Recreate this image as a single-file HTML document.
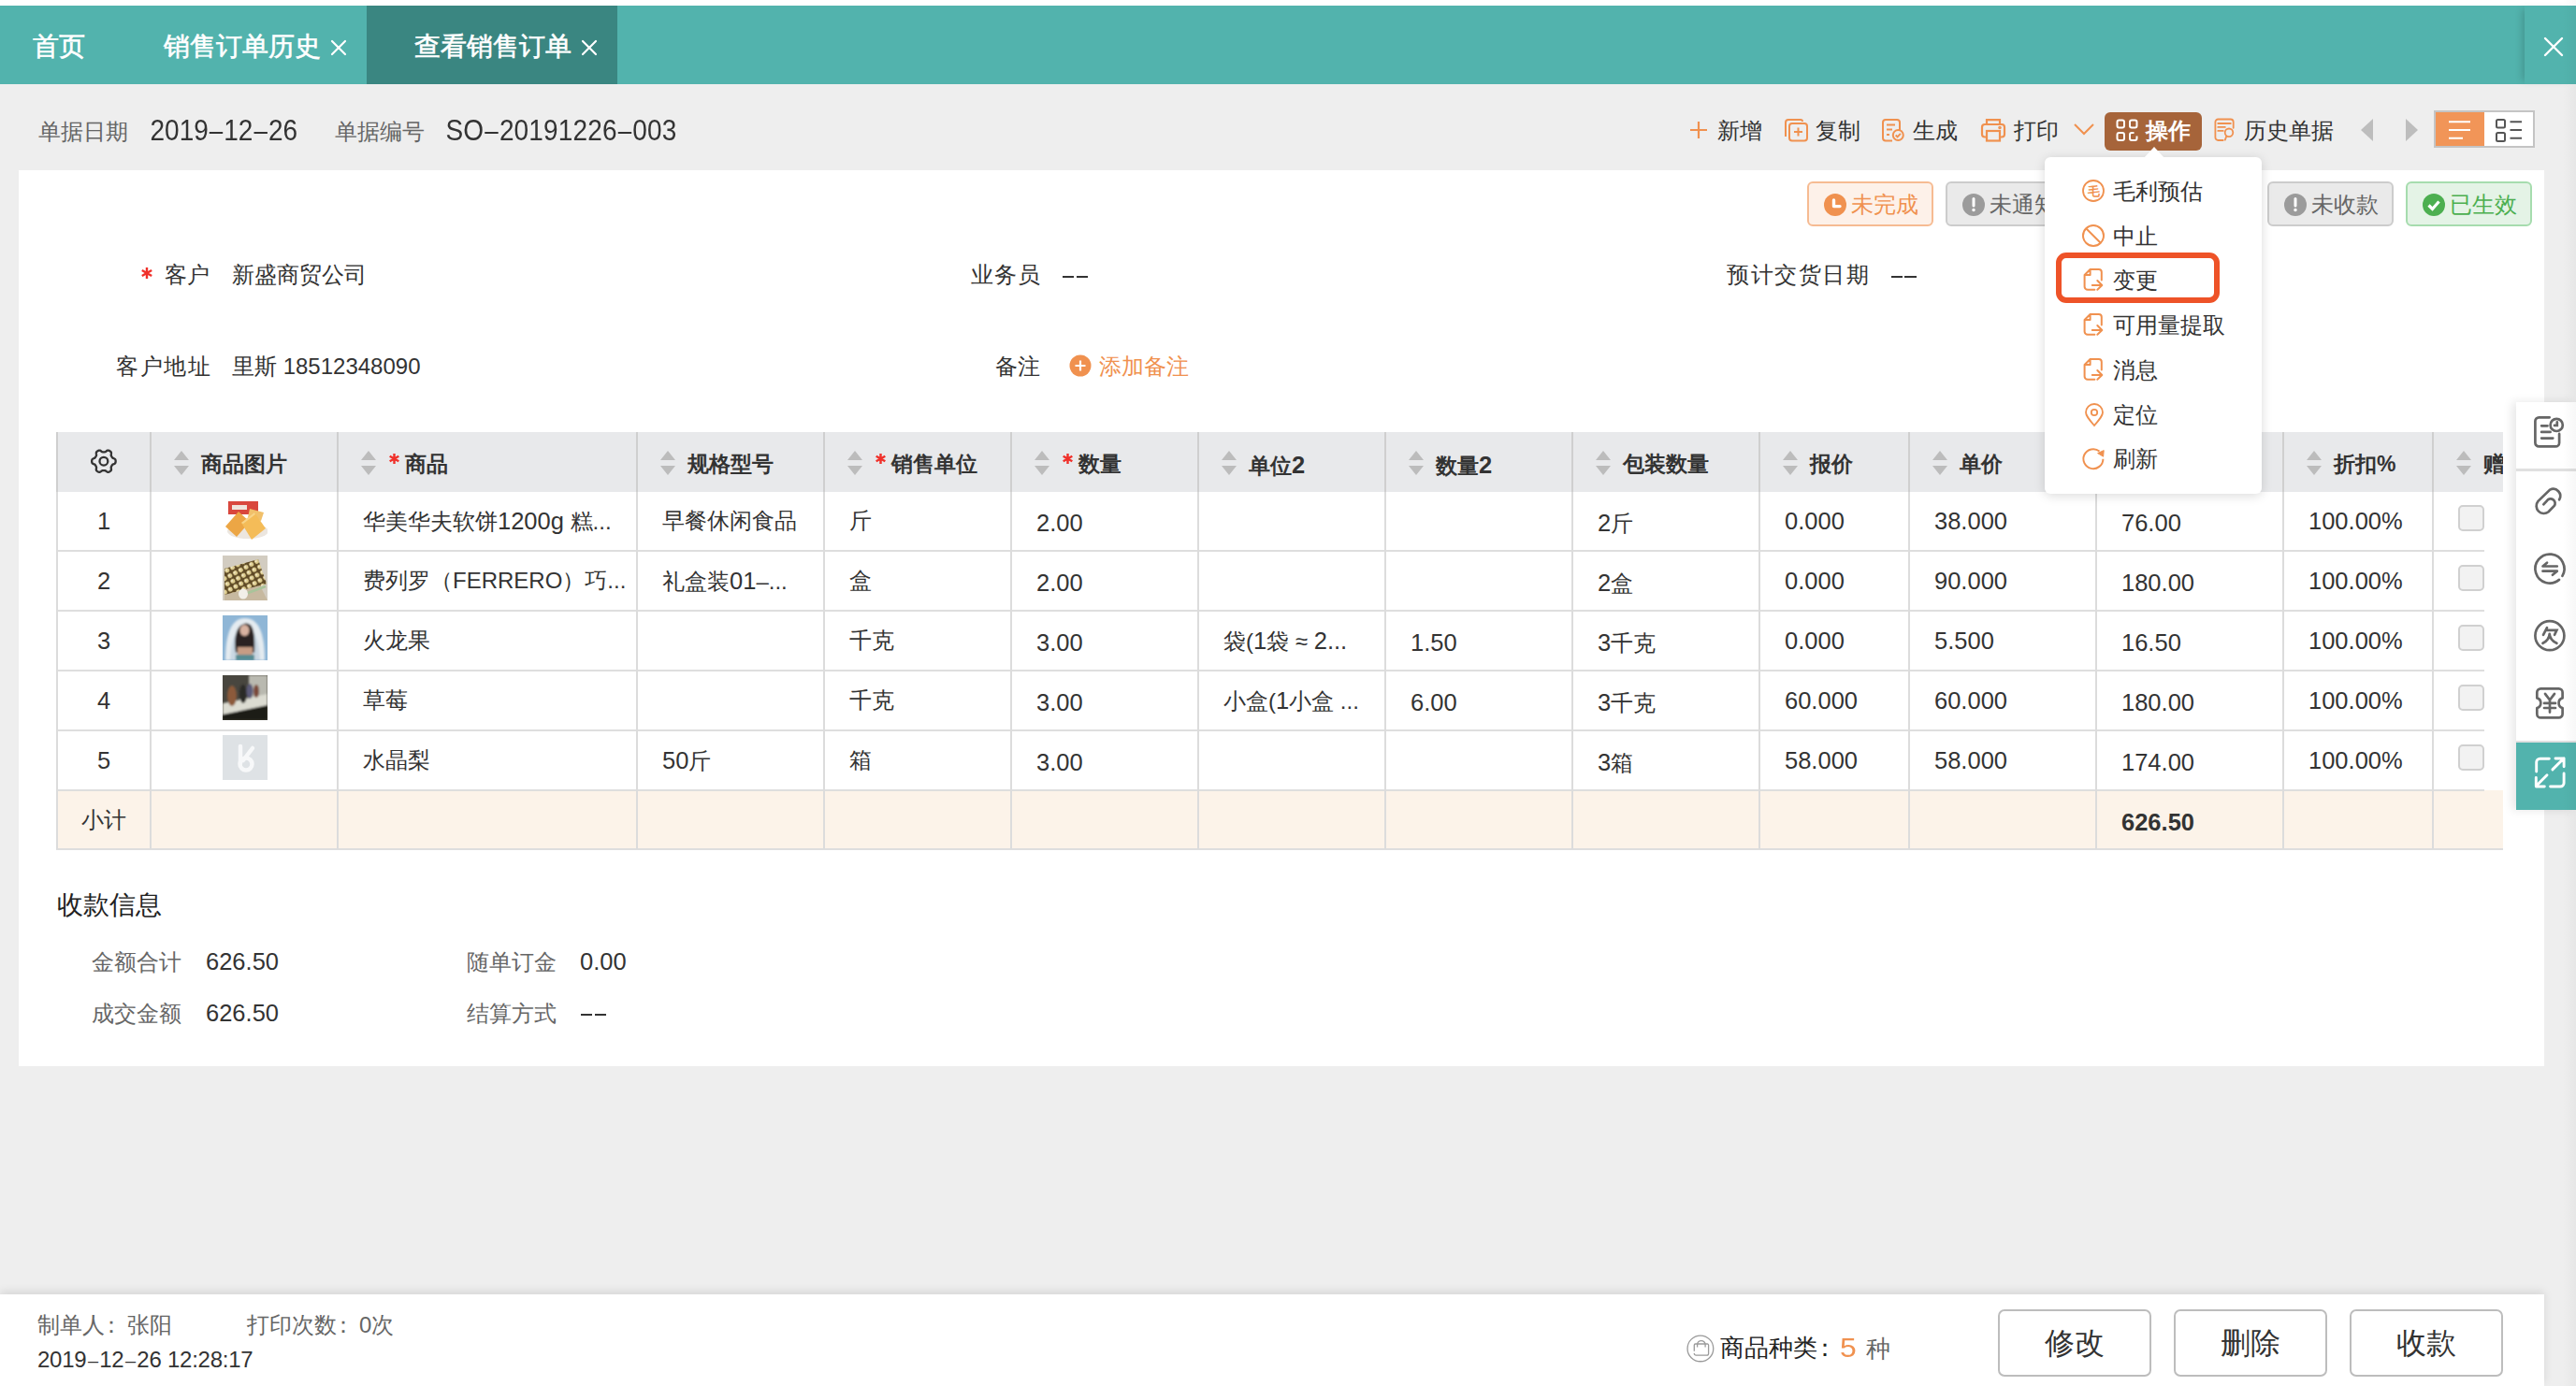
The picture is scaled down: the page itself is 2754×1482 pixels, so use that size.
<!DOCTYPE html>
<html><head><meta charset="utf-8">
<style>
*{box-sizing:border-box;margin:0;padding:0}
html,body{width:2754px;height:1482px;overflow:hidden}
body{position:relative;background:#eeeeee;font-family:"Liberation Sans",sans-serif;color:#333;}
.a{position:absolute;white-space:nowrap;line-height:1}
svg.a{overflow:visible}
#topstrip{left:0;top:0;width:2754px;height:6px;background:#fff}
#tabbar{left:0;top:6px;width:2754px;height:84px;background:#52b3ad}
#acttab{left:392px;top:6px;width:268px;height:84px;background:#3a8681}
.tab{color:#fff;font-size:28px;top:36px;-webkit-text-stroke:0.6px #fff}
#closebar{left:2699px;top:6px;width:55px;height:84px;background:#52b3ad;box-shadow:-6px 0 8px -4px rgba(0,0,0,.18)}
.lbl{color:#666;font-size:24px}
.val{color:#333;font-size:24px}
.tb{color:#333;font-size:24px;top:128px}
#card{left:20px;top:182px;width:2700px;height:958px;background:#fff}
#footer{left:0;top:1384px;width:2720px;height:98px;background:#fff;box-shadow:0 -3px 9px rgba(0,0,0,.10)}
.badge{top:194px;height:48px;width:135px;border:2px solid #ccc;border-radius:6px;background:#eaeaea}
.fl{color:#333;font-size:24px}
.hl{height:2px;background:#dedede}
.vl{width:2px;background:#dcdcdc}
.hd{font-size:23px;font-weight:bold;color:#333}
.td{font-size:24px;color:#333}
.cb{width:28px;height:28px;border:2px solid #d0d0d0;border-radius:5px;background:#f2f2f2}
.img1{background:radial-gradient(ellipse at 55% 60%,#f6b54a 0,#eea83a 40%,#f3ddc0 62%,#fff 70%)}
.img2{background:linear-gradient(160deg,#cfc4ae,#8e7443 40%,#b89c5c 60%,#d9d0c0)}
.img3{background:radial-gradient(ellipse at 50% 45%,#3a3030 0,#4a3a34 25%,#e0e6ea 45%,#8fb3d0 80%)}
.img4{background:linear-gradient(170deg,#2b2b26 0,#6d5a48 35%,#9a8f87 55%,#e8e8e2 70%,#2a2a24 100%)}
.img5{background:#dde1e4}
.btn{top:1400px;width:164px;height:72px;border:2px solid #bdbdbd;border-radius:7px;font-size:32px;color:#333;text-align:center;line-height:68px}
.dd{left:2259px;font-size:23.5px;color:#333;margin-top:2px}
.dsh{width:27px;height:2px;background:linear-gradient(90deg,#333 0,#333 12px,transparent 12px,transparent 14.5px,#333 14.5px)}
.num{font-size:25.5px}
</style></head><body>
<div class="a" id="topstrip"></div>
<div class="a" id="tabbar"></div>
<div class="a" id="acttab"></div>
<div class="a tab" style="left:35px">首页</div>
<div class="a tab" style="left:175px">销售订单历史</div>
<div class="a tab" style="left:443px">查看销售订单</div>
<svg class="a" style="left:353px;top:42px" width="18" height="18" viewBox="0 0 18 18"><path d="M2 2L16 16M16 2L2 16" stroke="#fff" stroke-width="2.2" stroke-linecap="round"/></svg>
<svg class="a" style="left:621px;top:42px" width="18" height="18" viewBox="0 0 18 18"><path d="M2 2L16 16M16 2L2 16" stroke="#fff" stroke-width="2.2" stroke-linecap="round"/></svg>
<div class="a" id="closebar"></div>
<svg class="a" style="left:2720px;top:40px" width="20" height="20" viewBox="0 0 20 20"><path d="M1 1L19 19M19 1L1 19" stroke="#fff" stroke-width="2.4" stroke-linecap="round"/></svg>

<!-- toolbar -->
<div class="a lbl" style="left:41px;top:129px">单据日期</div>
<div class="a val" style="left:160.5px;top:125px;font-size:28px;color:#333;transform:scaleY(1.1);transform-origin:0 0">2019<span style="display:inline-block;font-size:26px;margin:0 1px">–</span>12<span style="display:inline-block;font-size:26px;margin:0 1px">–</span>26</div>
<div class="a lbl" style="left:358px;top:129px">单据编号</div>
<div class="a val" style="left:476.5px;top:125px;font-size:28px;color:#333;transform:scaleY(1.1);transform-origin:0 0;letter-spacing:0.15px">SO<span style="display:inline-block;font-size:26px;margin:0 1px">–</span>20191226<span style="display:inline-block;font-size:26px;margin:0 1px">–</span>003</div>

<!-- toolbar right -->
<svg class="a" style="left:1806px;top:129px" width="20" height="20" viewBox="0 0 20 20"><path d="M10 1V19M1 10H19" stroke="#f0914f" stroke-width="2.2"/></svg>
<div class="a tb" style="left:1836px">新增</div>
<svg class="a" style="left:1907px;top:126px" width="26" height="26" viewBox="0 0 26 26" fill="none" stroke="#f0914f" stroke-width="2"><path d="M2 20V5a3 3 0 0 1 3-3h13a2 2 0 0 1 2 2"/><rect x="6" y="6" width="19" height="18.5" rx="3"/><path d="M15.5 10.5V19.5M11 15H20"/></svg>
<div class="a tb" style="left:1941px">复制</div>
<svg class="a" style="left:2011px;top:126px" width="26" height="26" viewBox="0 0 26 26" fill="none" stroke="#f0914f" stroke-width="2"><path d="M12 24.5H5a3 3 0 0 1-3-3V5a3 3 0 0 1 3-3h12a3 3 0 0 1 3 3v8"/><path d="M6 7.5H15M6 12.5H12M6 18H9"/><circle cx="18.3" cy="18.5" r="5.5"/><path d="M15.7 18.5L17.6 20.4L20.9 16.9"/></svg>
<div class="a tb" style="left:2045px">生成</div>
<svg class="a" style="left:2117px;top:126px" width="28" height="26" viewBox="0 0 28 26" fill="none" stroke="#f0914f" stroke-width="2.2"><path d="M7 7V2.2H21V7"/><path d="M7 20.5H5a3 3 0 0 1-3-3V10a3 3 0 0 1 3-3h18a3 3 0 0 1 3 3v7.5a3 3 0 0 1-3 3h-2"/><rect x="7" y="14" width="14" height="10.5"/><circle cx="21" cy="10.5" r=".7" fill="#f0914f"/></svg>
<div class="a tb" style="left:2153px">打印</div>
<svg class="a" style="left:2216px;top:131px" width="24" height="14" viewBox="0 0 24 14"><path d="M2 2L12 12L22 2" stroke="#f0914f" stroke-width="2" fill="none"/></svg>
<div class="a" style="left:2250px;top:120px;width:104px;height:41px;background:#a6643a;border-radius:6px"></div>
<svg class="a" style="left:2262px;top:127px" width="24" height="24" viewBox="0 0 24 24" fill="none" stroke="#fff" stroke-width="2"><rect x="1.5" y="1.5" width="7.5" height="8" rx="2"/><rect x="15" y="1.5" width="7.5" height="8" rx="2"/><rect x="1.5" y="15" width="7.5" height="8" rx="2"/><path d="M19.5 15H17a2 2 0 0 0-2 2v4a2 2 0 0 0 2 2h3.5a2 2 0 0 0 2-2v-2.5"/></svg>
<div class="a tb" style="left:2294px;color:#fff;font-weight:bold">操作</div>
<svg class="a" style="left:2367px;top:126px" width="24" height="26" viewBox="0 0 24 26" fill="none" stroke="#f0914f" stroke-width="1.8" stroke-linecap="round"><path d="M9.7 24H4.4a3 3 0 0 1-3-3V4.5a3 3 0 0 1 3-3H17.7a3 3 0 0 1 3 3V10.8"/><path d="M4.3 6H17.8M4.3 9.9H11.8M4.3 13.9H9.7" stroke-width="1.9"/><circle cx="16" cy="15.8" r="4.3"/><path d="M13.3 19.6L11.8 23.6"/></svg>
<div class="a tb" style="left:2399px">历史单据</div>
<svg class="a" style="left:2524px;top:127px" width="14" height="24" viewBox="0 0 14 24"><path d="M13 0V24L0 12Z" fill="#bdbdbd"/></svg>
<svg class="a" style="left:2571px;top:127px" width="14" height="24" viewBox="0 0 14 24"><path d="M1 0V24L14 12Z" fill="#bdbdbd"/></svg>
<div class="a" style="left:2602px;top:118px;width:108px;height:40px;border:2px solid #c4c4c4;background:#fff"></div>
<div class="a" style="left:2604px;top:120px;width:52px;height:36px;background:#f19558"></div>
<svg class="a" style="left:2618px;top:129px" width="24" height="20" viewBox="0 0 24 20" stroke="#fff" stroke-width="2"><path d="M0 1.3H23M0 10H23M0 18.7H15"/></svg>
<svg class="a" style="left:2668px;top:127px" width="29" height="25" viewBox="0 0 29 25" fill="none" stroke="#555" stroke-width="2"><rect x="1" y="1" width="9" height="8.5" rx="1.5"/><rect x="1" y="15" width="9" height="9" rx="1.5"/><path d="M15.5 3.3H28M15.5 12H28M15.5 20.7H28"/></svg>

<div class="a" id="card"></div>

<!-- badges -->
<div class="a badge" style="left:1932px;background:#fdf1e9;border-color:#f6bb92"></div>
<svg class="a" style="left:1950px;top:207px" width="24" height="24" viewBox="0 0 24 24"><circle cx="12" cy="12" r="12" fill="#f0914f"/><path d="M10.5 6.9V13.6H17" stroke="#fff" stroke-width="3.4" stroke-linecap="round" stroke-linejoin="round" fill="none"/></svg>
<div class="a" style="left:1979px;top:207px;font-size:24px;color:#f0914f">未完成</div>
<div class="a badge" style="left:2080px"></div>
<svg class="a" style="left:2098px;top:207px" width="24" height="24" viewBox="0 0 24 24"><circle cx="12" cy="12" r="12" fill="#9b9b9b"/><path d="M12 5.5V13" stroke="#fff" stroke-width="3" stroke-linecap="round"/><circle cx="12" cy="17.5" r="1.7" fill="#fff"/></svg>
<div class="a" style="left:2127px;top:207px;font-size:24px;color:#666">未通知</div>
<div class="a badge" style="left:2276px"></div>
<div class="a badge" style="left:2424px"></div>
<svg class="a" style="left:2442px;top:207px" width="24" height="24" viewBox="0 0 24 24"><circle cx="12" cy="12" r="12" fill="#9b9b9b"/><path d="M12 5.5V13" stroke="#fff" stroke-width="3" stroke-linecap="round"/><circle cx="12" cy="17.5" r="1.7" fill="#fff"/></svg>
<div class="a" style="left:2471px;top:207px;font-size:24px;color:#666">未收款</div>
<div class="a badge" style="left:2572px;background:#e4f3e6;border-color:#a6dcae"></div>
<svg class="a" style="left:2590px;top:207px" width="24" height="24" viewBox="0 0 24 24"><circle cx="12" cy="12" r="12" fill="#4caf50"/><path d="M6.5 12.5L10.5 16.5L17.5 8.5" stroke="#fff" stroke-width="3.2" fill="none"/></svg>
<div class="a" style="left:2619px;top:207px;font-size:24px;color:#4caf50">已生效</div>

<!-- form -->
<svg class="a" style="left:150px;top:285px" width="14" height="14" viewBox="0 0 14 14"><path d="M7 1V13M1.8 4L12.2 10M12.2 4L1.8 10" stroke="#f0302a" stroke-width="2.4"/></svg>
<div class="a fl" style="left:176px;top:282px">客户</div>
<div class="a fl" style="left:248px;top:282px">新盛商贸公司</div>
<div class="a fl" style="left:1038px;top:282px;letter-spacing:1px">业务员</div>
<div class="a dsh" style="left:1136px;top:295px"></div>
<div class="a fl" style="left:1846px;top:282px;letter-spacing:1.5px">预计交货日期</div>
<div class="a dsh" style="left:2022px;top:295px"></div>
<div class="a fl" style="left:124px;top:380px;letter-spacing:1.5px">客户地址</div>
<div class="a fl" style="left:248px;top:380px">里斯 18512348090</div>
<div class="a fl" style="left:1064px;top:380px">备注</div>
<svg class="a" style="left:1143px;top:379px" width="24" height="24" viewBox="0 0 24 24"><circle cx="12" cy="12" r="11.5" fill="#f0914f"/><path d="M12 6.5V17.5M6.5 12H17.5" stroke="#fff" stroke-width="2.2"/></svg>
<div class="a fl" style="left:1175px;top:380px;color:#f0914f">添加备注</div>

<div class="a" style="left:0;top:0;width:2676px;height:1000px;overflow:hidden">
<!-- table -->
<div class="a" style="left:60px;top:462px;width:2616px;height:64px;background:#e8e9eb"></div>
<div class="a" style="left:60px;top:845px;width:2616px;height:63px;background:#fcf3e9"></div>
<div class="a hl" style="left:60px;top:588px;width:2596px"></div>
<div class="a hl" style="left:60px;top:652px;width:2596px"></div>
<div class="a hl" style="left:60px;top:716px;width:2596px"></div>
<div class="a hl" style="left:60px;top:780px;width:2596px"></div>
<div class="a hl" style="left:60px;top:844px;width:2596px"></div>
<div class="a hl" style="left:60px;top:907px;width:2616px"></div>
<div class="a vl" style="left:60px;top:462px;height:446px"></div>
<div class="a vl" style="left:60px;top:462px;height:64px;background:#cfcfcf"></div>
<div class="a vl" style="left:160px;top:462px;height:446px"></div>
<div class="a vl" style="left:160px;top:462px;height:64px;background:#cfcfcf"></div>
<div class="a vl" style="left:360px;top:462px;height:446px"></div>
<div class="a vl" style="left:360px;top:462px;height:64px;background:#cfcfcf"></div>
<div class="a vl" style="left:680px;top:462px;height:446px"></div>
<div class="a vl" style="left:680px;top:462px;height:64px;background:#cfcfcf"></div>
<div class="a vl" style="left:880px;top:462px;height:446px"></div>
<div class="a vl" style="left:880px;top:462px;height:64px;background:#cfcfcf"></div>
<div class="a vl" style="left:1080px;top:462px;height:446px"></div>
<div class="a vl" style="left:1080px;top:462px;height:64px;background:#cfcfcf"></div>
<div class="a vl" style="left:1280px;top:462px;height:446px"></div>
<div class="a vl" style="left:1280px;top:462px;height:64px;background:#cfcfcf"></div>
<div class="a vl" style="left:1480px;top:462px;height:446px"></div>
<div class="a vl" style="left:1480px;top:462px;height:64px;background:#cfcfcf"></div>
<div class="a vl" style="left:1680px;top:462px;height:446px"></div>
<div class="a vl" style="left:1680px;top:462px;height:64px;background:#cfcfcf"></div>
<div class="a vl" style="left:1880px;top:462px;height:446px"></div>
<div class="a vl" style="left:1880px;top:462px;height:64px;background:#cfcfcf"></div>
<div class="a vl" style="left:2040px;top:462px;height:446px"></div>
<div class="a vl" style="left:2040px;top:462px;height:64px;background:#cfcfcf"></div>
<div class="a vl" style="left:2240px;top:462px;height:446px"></div>
<div class="a vl" style="left:2240px;top:462px;height:64px;background:#cfcfcf"></div>
<div class="a vl" style="left:2440px;top:462px;height:446px"></div>
<div class="a vl" style="left:2440px;top:462px;height:64px;background:#cfcfcf"></div>
<div class="a vl" style="left:2600px;top:462px;height:446px"></div>
<div class="a vl" style="left:2600px;top:462px;height:64px;background:#cfcfcf"></div>
<svg class="a" style="left:96px;top:479px" width="30" height="30" viewBox="0 0 30 30" fill="none" stroke="#333" stroke-width="2.3"><path d="M27.65 14.20 L27.62 14.87 L27.50 15.52 L27.25 16.16 L26.71 16.71 L25.81 17.12 L24.91 17.45 L24.33 17.82 L23.97 18.24 L23.69 18.68 L23.43 19.12 L23.17 19.57 L22.93 20.03 L22.75 20.55 L22.72 21.24 L22.89 22.19 L22.98 23.17 L22.77 23.92 L22.35 24.45 L21.84 24.88 L21.28 25.24 L20.68 25.55 L20.05 25.78 L19.38 25.87 L18.63 25.68 L17.82 25.11 L17.09 24.50 L16.48 24.17 L15.94 24.07 L15.42 24.05 L14.90 24.05 L14.38 24.05 L13.86 24.07 L13.32 24.17 L12.71 24.50 L11.98 25.11 L11.17 25.68 L10.42 25.87 L9.75 25.78 L9.12 25.55 L8.53 25.24 L7.96 24.88 L7.45 24.45 L7.03 23.92 L6.82 23.17 L6.91 22.19 L7.08 21.24 L7.05 20.55 L6.87 20.03 L6.63 19.57 L6.37 19.12 L6.11 18.68 L5.83 18.24 L5.47 17.82 L4.89 17.45 L3.99 17.12 L3.09 16.71 L2.55 16.16 L2.30 15.52 L2.18 14.87 L2.15 14.20 L2.18 13.53 L2.30 12.88 L2.55 12.24 L3.09 11.69 L3.99 11.28 L4.89 10.95 L5.47 10.58 L5.83 10.16 L6.11 9.72 L6.37 9.28 L6.63 8.83 L6.87 8.37 L7.05 7.85 L7.08 7.16 L6.91 6.21 L6.82 5.23 L7.03 4.48 L7.45 3.95 L7.96 3.52 L8.52 3.16 L9.12 2.85 L9.75 2.62 L10.42 2.53 L11.17 2.72 L11.98 3.29 L12.71 3.90 L13.32 4.23 L13.86 4.33 L14.38 4.35 L14.90 4.35 L15.42 4.35 L15.94 4.33 L16.48 4.23 L17.09 3.90 L17.82 3.29 L18.63 2.72 L19.38 2.53 L20.05 2.62 L20.68 2.85 L21.28 3.16 L21.84 3.52 L22.35 3.95 L22.77 4.48 L22.98 5.23 L22.89 6.21 L22.72 7.16 L22.75 7.85 L22.93 8.37 L23.17 8.83 L23.43 9.28 L23.69 9.72 L23.97 10.16 L24.33 10.58 L24.91 10.95 L25.81 11.28 L26.71 11.69 L27.25 12.24 L27.50 12.88 L27.62 13.53Z" stroke-linejoin="round"/><circle cx="14.9" cy="14.2" r="4.4"/></svg>
<svg class="a" style="left:186px;top:482px" width="16" height="26" viewBox="0 0 16 26"><path d="M8 0L16 10H0Z M0 16H16L8 26Z" fill="#bcbcbc"/></svg>
<div class="a hd" style="left:215px;top:485px">商品图片</div>
<svg class="a" style="left:386px;top:482px" width="16" height="26" viewBox="0 0 16 26"><path d="M8 0L16 10H0Z M0 16H16L8 26Z" fill="#bcbcbc"/></svg>
<svg class="a" style="left:415px;top:484px" width="13" height="13" viewBox="0 0 14 14"><path d="M7 1V13M1.8 4L12.2 10M12.2 4L1.8 10" stroke="#f0302a" stroke-width="2.6"/></svg>
<div class="a hd" style="left:433px;top:485px">商品</div>
<svg class="a" style="left:706px;top:482px" width="16" height="26" viewBox="0 0 16 26"><path d="M8 0L16 10H0Z M0 16H16L8 26Z" fill="#bcbcbc"/></svg>
<div class="a hd" style="left:735px;top:485px">规格型号</div>
<svg class="a" style="left:906px;top:482px" width="16" height="26" viewBox="0 0 16 26"><path d="M8 0L16 10H0Z M0 16H16L8 26Z" fill="#bcbcbc"/></svg>
<svg class="a" style="left:935px;top:484px" width="13" height="13" viewBox="0 0 14 14"><path d="M7 1V13M1.8 4L12.2 10M12.2 4L1.8 10" stroke="#f0302a" stroke-width="2.6"/></svg>
<div class="a hd" style="left:953px;top:485px">销售单位</div>
<svg class="a" style="left:1106px;top:482px" width="16" height="26" viewBox="0 0 16 26"><path d="M8 0L16 10H0Z M0 16H16L8 26Z" fill="#bcbcbc"/></svg>
<svg class="a" style="left:1135px;top:484px" width="13" height="13" viewBox="0 0 14 14"><path d="M7 1V13M1.8 4L12.2 10M12.2 4L1.8 10" stroke="#f0302a" stroke-width="2.6"/></svg>
<div class="a hd" style="left:1153px;top:485px">数量</div>
<svg class="a" style="left:1306px;top:482px" width="16" height="26" viewBox="0 0 16 26"><path d="M8 0L16 10H0Z M0 16H16L8 26Z" fill="#bcbcbc"/></svg>
<div class="a hd" style="left:1335px;top:485px">单位<span class="num">2</span></div>
<svg class="a" style="left:1506px;top:482px" width="16" height="26" viewBox="0 0 16 26"><path d="M8 0L16 10H0Z M0 16H16L8 26Z" fill="#bcbcbc"/></svg>
<div class="a hd" style="left:1535px;top:485px">数量<span class="num">2</span></div>
<svg class="a" style="left:1706px;top:482px" width="16" height="26" viewBox="0 0 16 26"><path d="M8 0L16 10H0Z M0 16H16L8 26Z" fill="#bcbcbc"/></svg>
<div class="a hd" style="left:1735px;top:485px">包装数量</div>
<svg class="a" style="left:1906px;top:482px" width="16" height="26" viewBox="0 0 16 26"><path d="M8 0L16 10H0Z M0 16H16L8 26Z" fill="#bcbcbc"/></svg>
<div class="a hd" style="left:1935px;top:485px">报价</div>
<svg class="a" style="left:2066px;top:482px" width="16" height="26" viewBox="0 0 16 26"><path d="M8 0L16 10H0Z M0 16H16L8 26Z" fill="#bcbcbc"/></svg>
<div class="a hd" style="left:2095px;top:485px">单价</div>
<svg class="a" style="left:2266px;top:482px" width="16" height="26" viewBox="0 0 16 26"><path d="M8 0L16 10H0Z M0 16H16L8 26Z" fill="#bcbcbc"/></svg>
<div class="a hd" style="left:2295px;top:485px">金额</div>
<svg class="a" style="left:2466px;top:482px" width="16" height="26" viewBox="0 0 16 26"><path d="M8 0L16 10H0Z M0 16H16L8 26Z" fill="#bcbcbc"/></svg>
<div class="a hd" style="left:2495px;top:485px">折扣%</div>
<svg class="a" style="left:2626px;top:482px" width="16" height="26" viewBox="0 0 16 26"><path d="M8 0L16 10H0Z M0 16H16L8 26Z" fill="#bcbcbc"/></svg>
<div class="a hd" style="left:2655px;top:485px">赠品</div>
<div class="a td num" style="left:60px;width:102px;text-align:center;top:545px">1</div>
<svg class="a" style="left:238px;top:531px;overflow:hidden" width="48" height="48" viewBox="0 0 48 48"><defs><filter id="bl1"><feGaussianBlur stdDeviation="0.7"/></filter></defs><g filter="url(#bl1)"><ellipse cx="27" cy="37" rx="22" ry="8" fill="#ece6df"/><rect x="6" y="5" width="32" height="14" fill="#d9473d"/><rect x="10" y="9" width="16" height="5" fill="#efe4dc"/><path d="M29 13L44 17L41 26L27 22Z" fill="#f1c06a"/><path d="M3 32L17 16L29 27L15 43Z" fill="#eca645"/><path d="M20 28L34 17L46 34L31 46Z" fill="#f4bc58"/><path d="M20 28L34 17L35 19L22 29Z" fill="#f8d489"/></g></svg>
<div class="a td" style="left:388px;top:545px">华美华夫软饼<span class="num">1200g</span> 糕...</div>
<div class="a td" style="left:708px;top:545px">早餐休闲食品</div>
<div class="a td" style="left:908px;top:545px">斤</div>
<div class="a td" style="left:1108px;top:547px"><span class="num">2.00</span></div>
<div class="a td" style="left:1708px;top:547px"><span class="num">2</span>斤</div>
<div class="a td" style="left:1908px;top:545px"><span class="num">0.000</span></div>
<div class="a td" style="left:2068px;top:545px"><span class="num">38.000</span></div>
<div class="a td" style="left:2268px;top:547px"><span class="num">76.00</span></div>
<div class="a td" style="left:2468px;top:545px"><span class="num">100.00%</span></div>
<div class="a cb" style="left:2628px;top:540px"></div>
<div class="a td num" style="left:60px;width:102px;text-align:center;top:609px">2</div>
<svg class="a" style="left:238px;top:594px;overflow:hidden" width="48" height="48" viewBox="0 0 48 48"><defs><pattern id="fp" width="6.5" height="6.5" patternUnits="userSpaceOnUse" patternTransform="rotate(-28)"><rect width="6.5" height="6.5" fill="#5e4a26"/><circle cx="3.25" cy="3.25" r="2.5" fill="#dccb8e"/><circle cx="2.6" cy="2.6" r="1" fill="#f4ecd0"/></pattern><filter id="bl2"><feGaussianBlur stdDeviation="0.7"/></filter></defs><rect width="48" height="48" fill="#d2ccc1"/><g filter="url(#bl2)"><path d="M2 14L38 4L47 30L10 47L2 42Z" fill="url(#fp)"/><path d="M2 42L40 32L48 48H2Z" fill="#c7b9a0"/><ellipse cx="22" cy="41" rx="5" ry="5.5" fill="#f2efe8"/><path d="M27 40L46 33" stroke="#a9c49a" stroke-width="2.5"/></g></svg>
<div class="a td" style="left:388px;top:609px">费列罗（FERRERO）巧...</div>
<div class="a td" style="left:708px;top:609px">礼盒装<span class="num">01</span>–...</div>
<div class="a td" style="left:908px;top:609px">盒</div>
<div class="a td" style="left:1108px;top:611px"><span class="num">2.00</span></div>
<div class="a td" style="left:1708px;top:611px"><span class="num">2</span>盒</div>
<div class="a td" style="left:1908px;top:609px"><span class="num">0.000</span></div>
<div class="a td" style="left:2068px;top:609px"><span class="num">90.000</span></div>
<div class="a td" style="left:2268px;top:611px"><span class="num">180.00</span></div>
<div class="a td" style="left:2468px;top:609px"><span class="num">100.00%</span></div>
<div class="a cb" style="left:2628px;top:604px"></div>
<div class="a td num" style="left:60px;width:102px;text-align:center;top:673px">3</div>
<svg class="a" style="left:238px;top:658px;overflow:hidden" width="48" height="48" viewBox="0 0 48 48"><defs><filter id="bl3"><feGaussianBlur stdDeviation="1"/></filter></defs><rect width="48" height="48" fill="#8fb6d6"/><g filter="url(#bl3)"><path d="M3 48C3 18 10 3 24 3S45 18 45 48Z" fill="#e4ebf0"/><path d="M8 48C9 30 12 20 16 18L32 18C36 20 39 30 40 48Z" fill="#c9d7e2"/><path d="M14 40C12 28 13 12 23 9S35 20 34 40Z" fill="#2a2220"/><ellipse cx="23.5" cy="16" rx="5" ry="6" fill="#d8b2a0"/><path d="M16 34H32V44H16Z" fill="#c69c84"/><path d="M14 42H34V48H14Z" fill="#578c92"/></g></svg>
<div class="a td" style="left:388px;top:673px">火龙果</div>
<div class="a td" style="left:908px;top:673px">千克</div>
<div class="a td" style="left:1108px;top:675px"><span class="num">3.00</span></div>
<div class="a td" style="left:1308px;top:673px">袋(<span class="num">1</span>袋 ≈ <span class="num">2...</span></div>
<div class="a td" style="left:1508px;top:675px"><span class="num">1.50</span></div>
<div class="a td" style="left:1708px;top:675px"><span class="num">3</span>千克</div>
<div class="a td" style="left:1908px;top:673px"><span class="num">0.000</span></div>
<div class="a td" style="left:2068px;top:673px"><span class="num">5.500</span></div>
<div class="a td" style="left:2268px;top:675px"><span class="num">16.50</span></div>
<div class="a td" style="left:2468px;top:673px"><span class="num">100.00%</span></div>
<div class="a cb" style="left:2628px;top:668px"></div>
<div class="a td num" style="left:60px;width:102px;text-align:center;top:737px">4</div>
<svg class="a" style="left:238px;top:722px;overflow:hidden" width="48" height="48" viewBox="0 0 48 48"><defs><filter id="bl4"><feGaussianBlur stdDeviation="1"/></filter></defs><rect width="48" height="48" fill="#48463f"/><g filter="url(#bl4)"><rect x="28" y="0" width="20" height="30" fill="#b9b9b0"/><path d="M0 30L48 20V38L0 48Z" fill="#dcdcd2"/><path d="M0 42L48 32V48H0Z" fill="#1c1c18"/><ellipse cx="10" cy="22" rx="5" ry="11" fill="#8c5a3a"/><ellipse cx="22" cy="20" rx="4" ry="10" fill="#2a2a26"/><ellipse cx="29" cy="17" rx="3.5" ry="8" fill="#5c5a78"/><ellipse cx="36" cy="17" rx="3" ry="7" fill="#7a4a3a"/></g></svg>
<div class="a td" style="left:388px;top:737px">草莓</div>
<div class="a td" style="left:908px;top:737px">千克</div>
<div class="a td" style="left:1108px;top:739px"><span class="num">3.00</span></div>
<div class="a td" style="left:1308px;top:737px">小盒(<span class="num">1</span>小盒 ...</div>
<div class="a td" style="left:1508px;top:739px"><span class="num">6.00</span></div>
<div class="a td" style="left:1708px;top:739px"><span class="num">3</span>千克</div>
<div class="a td" style="left:1908px;top:737px"><span class="num">60.000</span></div>
<div class="a td" style="left:2068px;top:737px"><span class="num">60.000</span></div>
<div class="a td" style="left:2268px;top:739px"><span class="num">180.00</span></div>
<div class="a td" style="left:2468px;top:737px"><span class="num">100.00%</span></div>
<div class="a cb" style="left:2628px;top:732px"></div>
<div class="a td num" style="left:60px;width:102px;text-align:center;top:801px">5</div>
<svg class="a" style="left:238px;top:786px;overflow:hidden" width="48" height="48" viewBox="0 0 48 48"><rect width="48" height="48" fill="#dee2e5"/><g fill="none" stroke="#f7f8f9" stroke-width="4.5" stroke-linecap="round"><path d="M19 12V30"/><path d="M32 14L22 27"/><circle cx="25" cy="31" r="6.5"/></g></svg>
<div class="a td" style="left:388px;top:801px">水晶梨</div>
<div class="a td" style="left:708px;top:801px"><span class="num">50</span>斤</div>
<div class="a td" style="left:908px;top:801px">箱</div>
<div class="a td" style="left:1108px;top:803px"><span class="num">3.00</span></div>
<div class="a td" style="left:1708px;top:803px"><span class="num">3</span>箱</div>
<div class="a td" style="left:1908px;top:801px"><span class="num">58.000</span></div>
<div class="a td" style="left:2068px;top:801px"><span class="num">58.000</span></div>
<div class="a td" style="left:2268px;top:803px"><span class="num">174.00</span></div>
<div class="a td" style="left:2468px;top:801px"><span class="num">100.00%</span></div>
<div class="a cb" style="left:2628px;top:796px"></div>
<div class="a td" style="left:60px;width:101px;text-align:center;top:865px">小计</div>
<div class="a td num" style="left:2268px;top:867px;font-weight:bold">626.50</div>
</div>

<!-- payment info -->
<div class="a" style="left:61px;top:954px;font-size:28px;color:#222">收款信息</div>
<div class="a lbl" style="left:98px;top:1017px">金额合计</div>
<div class="a val num" style="left:220px;top:1016px">626.50</div>
<div class="a lbl" style="left:98px;top:1072px">成交金额</div>
<div class="a val num" style="left:220px;top:1071px">626.50</div>
<div class="a lbl" style="left:499px;top:1017px">随单订金</div>
<div class="a val num" style="left:620px;top:1016px">0.00</div>
<div class="a lbl" style="left:499px;top:1072px">结算方式</div>
<div class="a dsh" style="left:621px;top:1084px"></div>
<div class="a" id="footer"></div>
<div class="a lbl" style="left:40px;top:1405px">制单人<span style="position:relative;left:-5px">：</span>张阳</div>
<div class="a lbl" style="left:264px;top:1405px">打印次数<span style="position:relative;left:-5px">：</span>0次</div>
<div class="a val" style="left:40px;top:1442px;letter-spacing:-0.25px">2019<span style="display:inline-block;font-size:20px;margin:0 1.5px">–</span>12<span style="display:inline-block;font-size:20px;margin:0 1.5px">–</span>26 12:28:17</div>
<svg class="a" style="left:1803px;top:1427px" width="30" height="30" viewBox="0 0 30 30" fill="none" stroke="#9a9a9a" stroke-width="1.3"><circle cx="14.9" cy="14.9" r="13.85"/><path d="M8.3 17.8V11.3a1.3 1.3 0 0 1 1.3-1.3H22.3a1.3 1.3 0 0 1 1.3 1.3V20.2a1.9 1.9 0 0 1-1.9 1.9H10.2a1.9 1.9 0 0 1-1.9-1.9V19.9"/><path d="M11.6 13.6V10.8a4.25 4.25 0 0 1 8.5 0V13.6"/></svg>
<div class="a" style="left:1839px;top:1428px;font-size:26px;color:#222">商品种类<span style="margin-left:-5px">：</span></div>
<div class="a" style="left:1967px;top:1427px;font-size:29px;color:#f0914f;transform:scaleX(1.1);transform-origin:0 0">5</div>
<div class="a" style="left:1995px;top:1429px;font-size:26px;color:#666">种</div>
<div class="a btn" style="left:2136px">修改</div>
<div class="a btn" style="left:2324px">删除</div>
<div class="a btn" style="left:2512px">收款</div>

<!-- side panel -->
<div class="a" style="left:2690px;top:430px;width:64px;height:436px;background:#fff;box-shadow:-4px 0 10px rgba(0,0,0,.10)"></div>
<div class="a" style="left:2690px;top:501px;width:64px;height:3px;background:#e0e0e0"></div>
<div class="a" style="left:2690px;top:792px;width:64px;height:2px;background:#e0e0e0"></div>
<div class="a" style="left:2690px;top:794px;width:64px;height:72px;background:#52b3ad"></div>
<svg class="a" style="left:2709px;top:445px" width="34" height="34" viewBox="0 0 34 34" fill="none" stroke="#666" stroke-width="2.7" stroke-linecap="round"><path d="M16.7 1.3H5.4a4 4 0 0 0-4 4V28.4a4 4 0 0 0 4 4H23.1a4 4 0 0 0 4-4V18.9"/><path d="M8.1 10.3H14.5M8.1 16.9H17.6M8.1 23.6H20.3"/><circle cx="24.2" cy="9.4" r="6.6"/><path d="M24.8 6.3V9.9H22"/></svg>
<svg class="a" style="left:2709px;top:519px" width="34" height="34" viewBox="0 0 34 34" fill="none" stroke="#666" stroke-width="2.7" stroke-linecap="round"><path d="M27.1 15.3A7.6 7.6 0 0 0 17.2 4.6L4.5 16.9A8 8 0 0 0 15.6 28.3L21.7 22A4.7 4.7 0 0 0 14 16.3L10.3 20.3"/></svg>
<svg class="a" style="left:2709px;top:591px" width="34" height="34" viewBox="0 0 34 34" fill="none" stroke="#666" stroke-width="2.7" stroke-linecap="round"><path d="M27 28.9A15.5 15.5 0 1 1 30.4 24.8"/><path d="M24.8 14.5H9.5L14 10.7M9.5 19.7H24.8L19.9 23.7" stroke-linejoin="round"/></svg>
<svg class="a" style="left:2709px;top:663px" width="34" height="34" viewBox="0 0 34 34" fill="none" stroke="#666" stroke-width="2.7" stroke-linecap="round"><circle cx="16.9" cy="16.7" r="15.5"/><path d="M14 8.2L10 15.8M13.1 10.9H24.4L22.1 15.8M16.7 14.9C16.5 20 13 23 9.5 24.8M16.7 14.9C17 20 20.5 23 24.4 24.8"/></svg>
<svg class="a" style="left:2709px;top:735px" width="34" height="34" viewBox="0 0 34 34" fill="none" stroke="#666" stroke-width="2.7" stroke-linecap="round" stroke-linejoin="round"><path d="M7.3 1.3H26.6a4 4 0 0 1 4 4V11.4a5.5 5.5 0 0 0 0 10.6V28.4a4 4 0 0 1-4 4H7.3a4 4 0 0 1-4-4V22a5.5 5.5 0 0 0 0-10.6V5.3a4 4 0 0 1 4-4z"/><path d="M12 6.9L17 13.5L22 6.9M17 13.5V26.6M11 16.9H23M11 22H23"/></svg>
<svg class="a" style="left:2709px;top:809px" width="34" height="34" viewBox="0 0 34 34" fill="none" stroke="#fff" stroke-width="2.9" stroke-linecap="round" stroke-linejoin="round"><path d="M2.7 16V6a3.8 3.8 0 0 1 3.8-3.8H16.3M32.1 17.9V28.2a3.8 3.8 0 0 1-3.8 3.8H17.6M19.9 13.9L32.1 1.7M23 2H32.1V10.7M14 19.8L2.3 31.5M2.3 22.5V32H11.3"/></svg>
<div class="a" style="left:2740px;top:0;width:14px;height:1482px;background:linear-gradient(90deg,rgba(0,0,0,0),rgba(0,0,0,.03))"></div>

<!-- dropdown -->
<div class="a" style="left:2186px;top:168px;width:232px;height:360px;background:#fff;border-radius:6px;box-shadow:0 2px 12px rgba(0,0,0,.15)"></div>
<svg class="a" style="left:2292px;top:156px" width="22" height="14" viewBox="0 0 22 14"><path d="M0 13L11 1L22 13Z" fill="#fff"/></svg>
<svg class="a" style="left:2226px;top:192px" width="24" height="24" viewBox="0 0 24 24" fill="none" stroke="#f0914f" stroke-width="1.8"><circle cx="12" cy="12" r="11"/><text x="12" y="16.5" text-anchor="middle" font-size="13" fill="#f0914f" stroke="none" font-weight="bold">毛</text></svg>
<div class="a dd" style="top:192px">毛利预估</div>
<svg class="a" style="left:2226px;top:240px" width="24" height="24" viewBox="0 0 24 24" fill="none" stroke="#f0914f" stroke-width="2"><circle cx="12" cy="12" r="11"/><path d="M4.5 4.5L19.5 19.5"/></svg>
<div class="a dd" style="top:240px">中止</div>
<svg class="a" style="left:2227px;top:287px" width="24" height="26" viewBox="0 0 24 26" fill="none" stroke="#f0914f" stroke-width="2" stroke-linejoin="round" stroke-linecap="round"><path d="M7.6 1H16.8a3 3 0 0 1 3 3V12.4M12.4 22.8H5a3.4 3.4 0 0 1-3.4-3.4V7L7.6 1V7H1.6"/><path d="M9.8 18H20.3M15.3 13L20.3 18L15.3 22.8"/></svg>
<div class="a dd" style="top:287px">变更</div>
<svg class="a" style="left:2227px;top:335px" width="24" height="26" viewBox="0 0 24 26" fill="none" stroke="#f0914f" stroke-width="2" stroke-linejoin="round" stroke-linecap="round"><path d="M7.6 1H16.8a3 3 0 0 1 3 3V12.4M12.4 22.8H5a3.4 3.4 0 0 1-3.4-3.4V7L7.6 1V7H1.6"/><path d="M9.8 18H20.3M15.3 13L20.3 18L15.3 22.8"/></svg>
<div class="a dd" style="top:335px">可用量提取</div>
<svg class="a" style="left:2227px;top:383px" width="24" height="26" viewBox="0 0 24 26" fill="none" stroke="#f0914f" stroke-width="2" stroke-linejoin="round" stroke-linecap="round"><path d="M7.6 1H16.8a3 3 0 0 1 3 3V12.4M12.4 22.8H5a3.4 3.4 0 0 1-3.4-3.4V7L7.6 1V7H1.6"/><path d="M9.8 18H20.3M15.3 13L20.3 18L15.3 22.8"/></svg>
<div class="a dd" style="top:383px">消息</div>
<svg class="a" style="left:2228px;top:432px" width="22" height="24" viewBox="0 0 22 24" fill="none" stroke="#f0914f" stroke-width="1.8"><path d="M11 23C5 16 2 12.5 2 9a9 9 0 0 1 18 0c0 3.5-3 7-9 14z"/><circle cx="11" cy="9" r="3.2"/></svg>
<div class="a dd" style="top:431px">定位</div>
<svg class="a" style="left:2226px;top:479px" width="26" height="26" viewBox="0 0 26 26" fill="none" stroke="#f0914f" stroke-width="2"><path d="M22.4 11.7A10.5 10.5 0 1 1 18.5 3.5"/><path d="M16.6 5.6L23.2 2.6L22.6 9.2Z" fill="#f0914f" stroke-width="1" stroke-linejoin="round"/></svg>
<div class="a dd" style="top:478px">刷新</div>
<div class="a" style="left:2198px;top:270px;width:175px;height:54px;border:6px solid #ee5328;border-radius:11px"></div>

</body></html>
